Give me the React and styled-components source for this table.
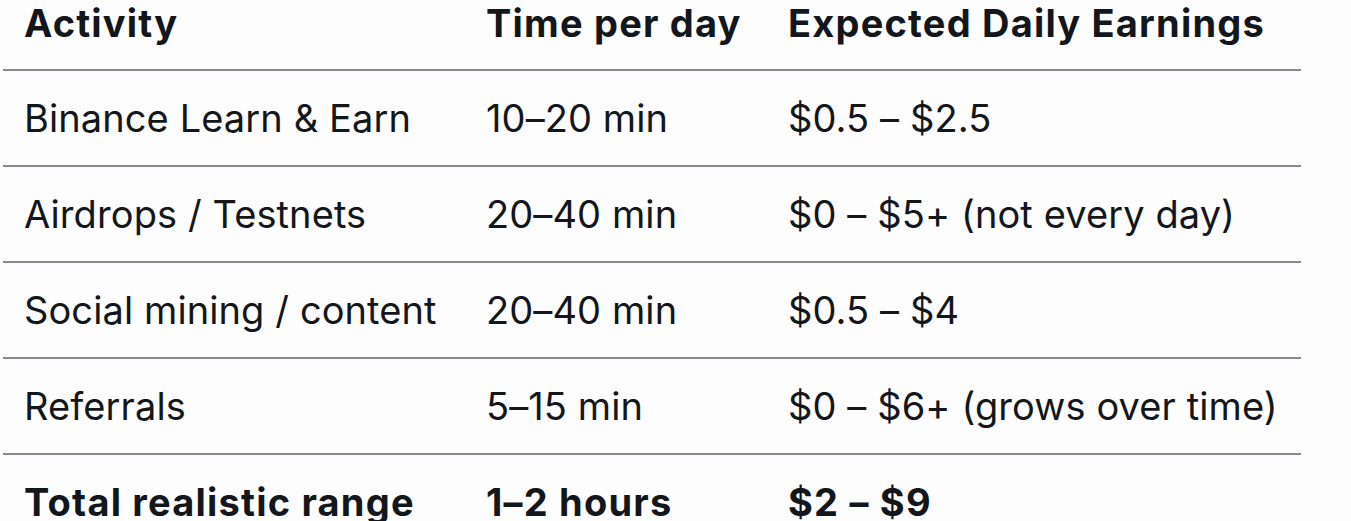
import React from "react";
import styled, { createGlobalStyle } from "styled-components";

const Global = createGlobalStyle`
  html, body { margin: 0; padding: 0; background: #fdfdfd; }
  body { font-family: Inter, Roboto, sans-serif; color: #13161a; }
`;

const Table = styled.div`
  display: grid;
  grid-template-columns: 462px 302px 534px;
  margin-left: 3px;
  width: 1298px;
`;

const Cell = styled.div`
  font-size: 38px;
  line-height: 46px;
  font-weight: ${(p) => (p.$bold ? 700 : 400)};
  letter-spacing: ${(p) => (p.$bold ? "1.2px" : "0.1px")};
  padding: ${(p) => (p.$head ? "0 20px 23px 21px" : "24px 20px 24px 21px")};
  border-top: ${(p) => (p.$head ? "none" : "2px solid #86898d")};
  white-space: nowrap;
`;

const head = ["Activity", "Time per day", "Expected Daily Earnings"];
const rows = [
  ["Binance Learn & Earn", "10–20 min", "$0.5 – $2.5"],
  ["Airdrops / Testnets", "20–40 min", "$0 – $5+ (not every day)"],
  ["Social mining / content", "20–40 min", "$0.5 – $4"],
  ["Referrals", "5–15 min", "$0 – $6+ (grows over time)"],
];
const total = ["Total realistic range", "1–2 hours", "$2 – $9"];

export default function App() {
  return (
    <>
      <Global />
      <Table>
        {head.map((h) => (
          <Cell key={h} $head $bold>
            {h}
          </Cell>
        ))}
        {rows.map((r) =>
          r.map((c, i) => <Cell key={r[0] + i}>{c}</Cell>)
        )}
        {total.map((c) => (
          <Cell key={c} $bold>
            {c}
          </Cell>
        ))}
      </Table>
    </>
  );
}
